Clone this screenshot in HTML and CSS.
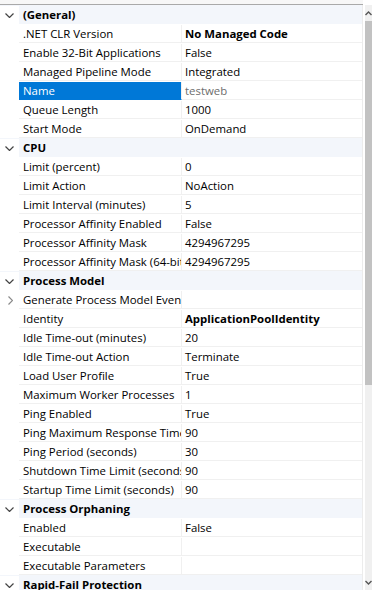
FILE: index.html
```html
<!DOCTYPE html>
<html lang="en">

<head>
    <meta charset="UTF-8" />
    <title>Application Pool Advanced Settings</title>
    <link rel="stylesheet" href="styles.css">
</head>

<body>
    <div class="topbar"></div>

    <div class="grid-wrapper">
        <div class="property-grid">
            <!-- General -->
            <div class="row category">
                <span class="gutter"><svg class="chevron" viewBox="0 0 9 5"><path d="M0.5 0.5 L4.5 4.5 L8.5 0.5" /></svg></span>
                <span class="cat-name">(General)</span>
            </div>
            <div class="row"><span class="gutter"></span><span class="name">.NET CLR Version</span><span class="value bold">No Managed Code</span></div>
            <div class="row"><span class="gutter"></span><span class="name">Enable 32-Bit Applications</span><span class="value">False</span></div>
            <div class="row"><span class="gutter"></span><span class="name">Managed Pipeline Mode</span><span class="value">Integrated</span></div>
            <div class="row selected"><span class="gutter"></span><span class="name">Name</span><span class="value readonly">testweb</span></div>
            <div class="row"><span class="gutter"></span><span class="name">Queue Length</span><span class="value">1000</span></div>
            <div class="row"><span class="gutter"></span><span class="name">Start Mode</span><span class="value">OnDemand</span></div>

            <!-- CPU -->
            <div class="row category">
                <span class="gutter"><svg class="chevron" viewBox="0 0 9 5"><path d="M0.5 0.5 L4.5 4.5 L8.5 0.5" /></svg></span>
                <span class="cat-name">CPU</span>
            </div>
            <div class="row"><span class="gutter"></span><span class="name">Limit (percent)</span><span class="value">0</span></div>
            <div class="row"><span class="gutter"></span><span class="name">Limit Action</span><span class="value">NoAction</span></div>
            <div class="row"><span class="gutter"></span><span class="name">Limit Interval (minutes)</span><span class="value">5</span></div>
            <div class="row"><span class="gutter"></span><span class="name">Processor Affinity Enabled</span><span class="value">False</span></div>
            <div class="row"><span class="gutter"></span><span class="name">Processor Affinity Mask</span><span class="value">4294967295</span></div>
            <div class="row"><span class="gutter"></span><span class="name">Processor Affinity Mask (64-bit option)</span><span class="value">4294967295</span></div>

            <!-- Process Model -->
            <div class="row category">
                <span class="gutter"><svg class="chevron" viewBox="0 0 9 5"><path d="M0.5 0.5 L4.5 4.5 L8.5 0.5" /></svg></span>
                <span class="cat-name">Process Model</span>
            </div>
            <div class="row">
                <span class="gutter"><svg class="expander" viewBox="0 0 5 9"><path d="M0.5 0.5 L4.5 4.5 L0.5 8.5" /></svg></span>
                <span class="name">Generate Process Model Event Log Entry</span><span class="value"></span>
            </div>
            <div class="row"><span class="gutter"></span><span class="name">Identity</span><span class="value bold">ApplicationPoolIdentity</span></div>
            <div class="row"><span class="gutter"></span><span class="name">Idle Time-out (minutes)</span><span class="value">20</span></div>
            <div class="row"><span class="gutter"></span><span class="name">Idle Time-out Action</span><span class="value">Terminate</span></div>
            <div class="row"><span class="gutter"></span><span class="name">Load User Profile</span><span class="value">True</span></div>
            <div class="row"><span class="gutter"></span><span class="name">Maximum Worker Processes</span><span class="value">1</span></div>
            <div class="row"><span class="gutter"></span><span class="name">Ping Enabled</span><span class="value">True</span></div>
            <div class="row"><span class="gutter"></span><span class="name">Ping Maximum Response Time (seconds)</span><span class="value">90</span></div>
            <div class="row"><span class="gutter"></span><span class="name">Ping Period (seconds)</span><span class="value">30</span></div>
            <div class="row"><span class="gutter"></span><span class="name">Shutdown Time Limit (seconds)</span><span class="value">90</span></div>
            <div class="row"><span class="gutter"></span><span class="name">Startup Time Limit (seconds)</span><span class="value">90</span></div>

            <!-- Process Orphaning -->
            <div class="row category">
                <span class="gutter"><svg class="chevron" viewBox="0 0 9 5"><path d="M0.5 0.5 L4.5 4.5 L8.5 0.5" /></svg></span>
                <span class="cat-name">Process Orphaning</span>
            </div>
            <div class="row"><span class="gutter"></span><span class="name">Enabled</span><span class="value">False</span></div>
            <div class="row"><span class="gutter"></span><span class="name">Executable</span><span class="value"></span></div>
            <div class="row"><span class="gutter"></span><span class="name">Executable Parameters</span><span class="value"></span></div>

            <!-- Rapid-Fail Protection -->
            <div class="row category">
                <span class="gutter"><svg class="chevron" viewBox="0 0 9 5"><path d="M0.5 0.5 L4.5 4.5 L8.5 0.5" /></svg></span>
                <span class="cat-name">Rapid-Fail Protection</span>
            </div>
        </div>

        <div class="scrollbar">
            <div class="scroll-arrow">
                <svg viewBox="0 0 7 5"><path d="M0.5 4 L3.5 1 L6.5 4" /></svg>
            </div>
            <div class="scroll-thumb"></div>
            <div class="scroll-track"></div>
            <div class="scroll-arrow">
                <svg viewBox="0 0 7 5"><path d="M0.5 1 L3.5 4 L6.5 1" /></svg>
            </div>
        </div>
    </div>
</body>

</html>
```

FILE: styles.css
```css
body {
    margin: 0;
    font-family: "Open Sans", "Noto Sans", Arial, sans-serif;
    font-size: 11.4px;
    background-color: #ffffff;
    color: #000;
    width: 372px;
    height: 590px;
    overflow: hidden;
}

.topbar {
    height: 4px;
    background-color: #f7f7f7;
    border-bottom: 1px solid #a9a9a9;
    margin-right: 9px;
}

.grid-wrapper {
    display: flex;
    height: 585px;
}

.property-grid {
    width: 362px;
    border-right: 1px solid #ececec;
    overflow: hidden;
}

.row {
    display: flex;
    height: 19px;
    align-items: stretch;
    line-height: 18px;
    padding-top: 1px;
    box-sizing: border-box;
    white-space: nowrap;
}

.gutter {
    flex: 0 0 19px;
    display: flex;
    align-items: center;
    justify-content: center;
}

.name {
    flex: 0 0 158px;
    padding-left: 4px;
    overflow: hidden;
    border-bottom: 1px solid #f0f0f0;
    border-right: 1px solid #f0f0f0;
}

.value {
    flex: 1;
    padding-left: 3px;
    overflow: hidden;
    border-bottom: 1px solid #f0f0f0;
}

.bold {
    font-weight: bold;
}

.readonly {
    color: #6d6d6d;
}

.selected .name {
    background-color: #0078d7;
    color: white;
    border-bottom-color: #0078d7;
}

.category {
    background-color: #f3f6fb;
}

.category .gutter {
    background-color: #ffffff;
}

.cat-name {
    padding-left: 4px;
    font-weight: bold;
}

.chevron {
    width: 9px;
    height: 5px;
    fill: none;
    stroke: #444;
    stroke-width: 1.2;
}

.expander {
    width: 5px;
    height: 9px;
    fill: none;
    stroke: #8a8a8a;
    stroke-width: 1.2;
    margin-left: 2px;
}

/* thin scrollbar on the right */
.scrollbar {
    flex: 0 0 7px;
    margin-left: 2px;
    display: flex;
    flex-direction: column;
    background-color: #f0f0f0;
}

.scroll-arrow {
    height: 16px;
    display: flex;
    align-items: center;
    justify-content: center;
}

.scroll-arrow svg {
    width: 7px;
    height: 5px;
    fill: none;
    stroke: #555;
    stroke-width: 1.4;
}

.scroll-thumb {
    height: 364px;
    background-color: #c2c2c2;
}

.scroll-track {
    flex: 1;
}
```
